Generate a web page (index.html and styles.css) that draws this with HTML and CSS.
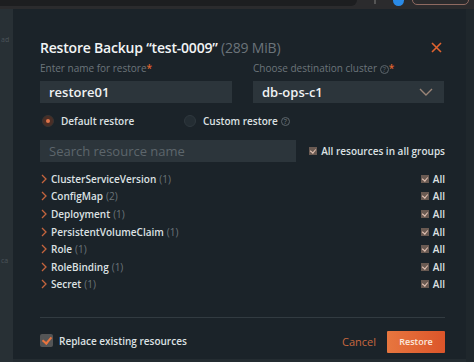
FILE: index.html
```html
<!DOCTYPE html>
<html lang="en">
<head>
    <meta charset="UTF-8">
    <title>Restore Backup</title>
    <link rel="stylesheet" href="styles.css">
</head>
<body>

    <div class="topbar">
        <div class="top-search"></div>
        <div class="top-sep"></div>
        <div class="top-dot"></div>
        <div class="top-btn"></div>
    </div>

    <div class="page">
        <div class="side"><span class="side-a">ad</span><span class="side-b">ca</span></div>

        <div class="modal">
            <div class="modal-head">
                <h1>Restore Backup “test-0009” <span class="size">(289 MiB)</span></h1>
                <svg class="close" width="11" height="11" viewBox="0 0 11 11"><path d="M1 1L10 10M10 1L1 10" stroke="#e0632f" stroke-width="1.6"/></svg>
            </div>

            <div class="fields">
                <div class="field">
                    <label>Enter name for restore<b>*</b></label>
                    <div class="input">restore01</div>
                </div>
                <div class="field">
                    <label>Choose destination cluster <span class="help">?</span><b>*</b></label>
                    <div class="input select">
                        db-ops-c1
                        <svg width="14" height="8" viewBox="0 0 14 8"><path d="M1 1L7 7L13 1" fill="none" stroke="#9a8577" stroke-width="1.4"/></svg>
                    </div>
                </div>
            </div>

            <div class="radios">
                <div class="radio on"><span class="circle"></span>Default restore</div>
                <div class="radio"><span class="circle"></span>Custom restore <span class="help">?</span></div>
            </div>

            <div class="search-row">
                <div class="search">Search resource name</div>
                <div class="check-label"><span class="box"></span>All resources in all groups</div>
            </div>

            <ul class="groups">
                <li><svg class="chev" width="6" height="10" viewBox="0 0 6 10"><path d="M1 1L5 5L1 9" fill="none" stroke="#c4643d" stroke-width="1.3"/></svg>ClusterServiceVersion <i>(1)</i><span class="all"><span class="box"></span>All</span></li>
                <li><svg class="chev" width="6" height="10" viewBox="0 0 6 10"><path d="M1 1L5 5L1 9" fill="none" stroke="#c4643d" stroke-width="1.3"/></svg>ConfigMap <i>(2)</i><span class="all"><span class="box"></span>All</span></li>
                <li><svg class="chev" width="6" height="10" viewBox="0 0 6 10"><path d="M1 1L5 5L1 9" fill="none" stroke="#c4643d" stroke-width="1.3"/></svg>Deployment <i>(1)</i><span class="all"><span class="box"></span>All</span></li>
                <li><svg class="chev" width="6" height="10" viewBox="0 0 6 10"><path d="M1 1L5 5L1 9" fill="none" stroke="#c4643d" stroke-width="1.3"/></svg>PersistentVolumeClaim <i>(1)</i><span class="all"><span class="box"></span>All</span></li>
                <li><svg class="chev" width="6" height="10" viewBox="0 0 6 10"><path d="M1 1L5 5L1 9" fill="none" stroke="#c4643d" stroke-width="1.3"/></svg>Role <i>(1)</i><span class="all"><span class="box"></span>All</span></li>
                <li><svg class="chev" width="6" height="10" viewBox="0 0 6 10"><path d="M1 1L5 5L1 9" fill="none" stroke="#c4643d" stroke-width="1.3"/></svg>RoleBinding <i>(1)</i><span class="all"><span class="box"></span>All</span></li>
                <li><svg class="chev" width="6" height="10" viewBox="0 0 6 10"><path d="M1 1L5 5L1 9" fill="none" stroke="#c4643d" stroke-width="1.3"/></svg>Secret <i>(1)</i><span class="all"><span class="box"></span>All</span></li>
            </ul>

            <div class="footer">
                <div class="replace"><span class="box big"></span>Replace existing resources</div>
                <div class="actions">
                    <span class="cancel">Cancel</span>
                    <button class="restore">Restore</button>
                </div>
            </div>
        </div>

        <div class="rside"></div>
    </div>

</body>
</html>
```

FILE: styles.css
```css
* {
    box-sizing: border-box;
}

body {
    margin: 0;
    width: 474px;
    height: 362px;
    overflow: hidden;
    background-color: #1e262c;
    font-family: "Open Sans", "Noto Sans", sans-serif;
    color: #e9ecee;
}

.topbar {
    height: 9px;
    background-color: #2b2b2d;
    display: flex;
}

.top-search {
    width: 357px;
    height: 6px;
    background-color: #1d1e20;
    border-radius: 0 0 6px 0;
}

.top-sep {
    width: 2px;
    height: 4px;
    margin-left: 17px;
    background-color: #555;
}

.top-dot {
    width: 11px;
    height: 11px;
    margin-left: 17px;
    margin-top: -5px;
    border-radius: 50%;
    background-color: #2a8ae6;
}

.top-btn {
    width: 57px;
    height: 10px;
    margin-left: 8px;
    margin-top: -5px;
    border: 1px solid #8f6a61;
    border-radius: 0 0 5px 5px;
}

.page {
    display: flex;
    height: 353px;
}

.side {
    width: 13px;
    background-color: #283035;
    display: flex;
    flex-direction: column;
    font-size: 7px;
    color: #4b545a;
}

.side-a {
    margin-top: 26px;
    margin-left: 1px;
}

.side-b {
    margin-top: 212px;
    margin-left: 1px;
}

.rside {
    width: 8px;
    background-color: #1f272c;
}

.modal {
    flex: 1;
    background-color: #1b2329;
    padding: 29px 21px 0 27px;
    display: flex;
    flex-direction: column;
    border-bottom: 3px solid #242c31;
}

.modal-head {
    display: flex;
    justify-content: space-between;
    align-items: center;
    height: 18px;
}

.modal-head h1 {
    margin: 0;
    font-size: 14px;
    font-weight: 600;
    letter-spacing: -0.2px;
    color: #f2f4f5;
}

.size {
    font-weight: 400;
    color: #6b747a;
}

.close {
    margin-right: 3px;
}

.fields {
    display: grid;
    grid-template-columns: 192px 191px;
    gap: 21px;
    margin-top: 6px;
}

.field label {
    display: block;
    font-size: 10px;
    color: #6c757b;
    height: 13px;
    line-height: 13px;
}

.field label b {
    color: #e0632f;
    font-weight: 600;
}

.help {
    display: inline-flex;
    align-items: center;
    justify-content: center;
    width: 9px;
    height: 9px;
    border: 1px solid #5d666c;
    border-radius: 50%;
    font-size: 7px;
    line-height: 1;
    color: #5d666c;
}

.input {
    margin-top: 6px;
    height: 22px;
    background-color: #2c353b;
    font-size: 13px;
    font-weight: 600;
    color: #f0f2f3;
    padding: 0 9px;
    display: flex;
    align-items: center;
}

.input.select {
    justify-content: space-between;
    padding-right: 11px;
}

.radios {
    display: flex;
    margin-top: 8px;
    height: 20px;
    align-items: center;
    padding-left: 2px;
}

.radio {
    display: flex;
    align-items: center;
    font-size: 10px;
    font-weight: 600;
    color: #dde1e3;
    width: 142px;
}

.radio .circle {
    width: 12px;
    height: 12px;
    border-radius: 50%;
    background-color: #242d33;
    border: 1px solid #2f383e;
    margin-right: 7px;
    position: relative;
}

.radio.on .circle {
    background-color: #4a2e26;
    border-color: #3a3431;
}

.radio.on .circle::after {
    content: "";
    position: absolute;
    left: 3px;
    top: 3px;
    width: 4px;
    height: 4px;
    border-radius: 50%;
    background-color: #e0744a;
}

.radio .help {
    margin-left: 3px;
}

.search-row {
    display: flex;
    align-items: center;
    justify-content: space-between;
    margin-top: 9px;
}

.search {
    width: 256px;
    height: 22px;
    background-color: #2c353b;
    font-size: 13px;
    color: #5d666c;
    padding: 0 9px;
    display: flex;
    align-items: center;
}

.check-label {
    display: flex;
    align-items: center;
    font-size: 10px;
    font-weight: 600;
    color: #dde1e3;
}

.box {
    width: 8px;
    height: 8px;
    background-color: #6a5a52;
    margin-right: 4px;
    position: relative;
}

.box::after {
    content: "";
    position: absolute;
    left: 2px;
    top: 1px;
    width: 3px;
    height: 4px;
    border: solid #e7c6b7;
    border-width: 0 1px 1px 0;
    transform: rotate(40deg);
}

.groups {
    list-style: none;
    margin: 8px 0 0;
    padding: 0;
}

.groups li {
    display: flex;
    align-items: center;
    height: 17.6px;
    font-size: 10px;
    font-weight: 600;
    color: #dde1e3;
}

.chev {
    margin-left: 1px;
    margin-right: 4px;
}

.groups i {
    font-style: normal;
    font-weight: 400;
    color: #6b747a;
    margin-left: 3px;
}

.all {
    margin-left: auto;
    display: flex;
    align-items: center;
}

.footer {
    margin-top: auto;
    border-top: 1px solid #323b41;
    height: 39px;
    margin-bottom: 3px;
    padding-top: 9px;
    display: flex;
    align-items: center;
    justify-content: space-between;
}

.replace {
    display: flex;
    align-items: center;
    font-size: 10px;
    font-weight: 600;
    color: #dde1e3;
    margin-top: -2px;
}

.box.big {
    width: 13px;
    height: 13px;
    background-color: #545556;
    border-radius: 2px;
    margin-right: 6px;
}

.box.big::after {
    left: 4px;
    top: 1px;
    width: 4px;
    height: 7px;
    border-color: #e8743f;
    border-width: 0 2px 2px 0;
}

.actions {
    display: flex;
    align-items: center;
    margin-top: 0;
}

.cancel {
    color: #c8673f;
    font-size: 11px;
    margin-right: 11px;
}

.restore {
    width: 58px;
    height: 22px;
    border: none;
    background: linear-gradient(90deg, #e7763f, #dc552a);
    color: #fbe9df;
    font-family: inherit;
    font-size: 9px;
    font-weight: 600;
    border-radius: 1px;
    cursor: pointer;
}
```
